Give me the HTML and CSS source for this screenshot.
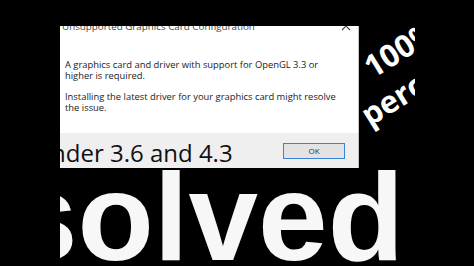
FILE: index.html
```html
<!DOCTYPE html>
<html>
<head>
<meta charset="utf-8">
<link rel="stylesheet" href="styles.css">
</head>
<body>
<div class="stage">
  <div class="dialog">
    <div class="titlebar">
      <span class="title">Unsupported Graphics Card Configuration</span>
      <svg class="close" width="10" height="10" viewBox="0 0 10 10"><path d="M1 1 L9 9 M9 1 L1 9" stroke="#444" stroke-width="1.1" fill="none"/></svg>
    </div>
    <div class="body">
      <p>A graphics card and driver with support for OpenGL 3.3 or higher is required.</p>
      <p>Installing the latest driver for your graphics card might resolve the issue.</p>
    </div>
    <div class="footer">
      <span class="caption">nder 3.6 and 4.3</span>
      <button class="ok">OK</button>
    </div>
  </div>
  <div class="big">solved</div>
  <div class="rot">
    <div class="line1">100%</div>
    <div class="line2">percent</div>
  </div>
</div>
</body>
</html>
```
FILE: styles.css
```css
* { box-sizing: border-box; }
html, body { margin: 0; padding: 0; }
body {
  width: 474px;
  height: 266px;
  background: #000;
  overflow: hidden;
}
.stage {
  margin-left: 60px;
  width: 355px;
  height: 266px;
  position: relative;
  overflow: hidden;
  background: #000;
}
.dialog {
  margin-top: 26px;
  width: 299px;
  height: 142px;
  background: #fff;
  border-right: 1px solid #c4c4c4;
  position: relative;
  z-index: 2;
  overflow: hidden;
  display: flex;
  flex-direction: column;
}
.titlebar {
  margin-top: -5px;
  height: 12px;
  display: flex;
  align-items: center;
  justify-content: space-between;
  padding-left: 2px;
  padding-right: 7px;
}
.title {
  font-family: "Open Sans", sans-serif;
  font-size: 9.8px;
  line-height: 12px;
  color: #444;
  white-space: nowrap;
}
.close { display: block; margin-top: -2px; }
.body {
  margin-top: 26px;
  padding-left: 5px;
  padding-right: 22px;
  font-family: "Open Sans", sans-serif;
  font-size: 9.4px;
  line-height: 11px;
  color: #222;
  font-weight: 500;
}
.body p { margin: 0 0 10px 0; }
.footer {
  margin-top: auto;
  height: 35px;
  background: #efefef;
  display: flex;
  align-items: flex-start;
}
.caption {
  margin-top: 8px;
  margin-left: -9px;
  font-family: "Open Sans", sans-serif;
  font-size: 24px;
  line-height: 24px;
  color: #111;
  white-space: nowrap;
}
.ok {
  margin-top: 10px;
  margin-left: auto;
  margin-right: 13px;
  width: 62px;
  height: 16px;
  background: #e3e3e3;
  border: 1.5px solid #3d83d3;
  border-radius: 0;
  font-family: "Open Sans", sans-serif;
  font-size: 8px;
  line-height: 12px;
  color: #333;
  padding: 0;
  flex: none;
}
.big {
  font-family: "Liberation Sans", Arial, sans-serif;
  font-weight: 700;
  font-size: 125px;
  line-height: 97px;
  color: #f7f7f7;
  margin-left: -52px;
  white-space: nowrap;
}
.rot {
  position: absolute;
  left: 313px;
  top: 47.5px;
  transform-origin: 0 31.5px;
  transform: rotate(-32deg);
  font-family: "Open Sans", sans-serif;
  font-weight: 700;
  font-size: 31px;
  line-height: 39px;
  color: #fff;
  white-space: nowrap;
}
.line2 { margin-left: -28px; }
```
